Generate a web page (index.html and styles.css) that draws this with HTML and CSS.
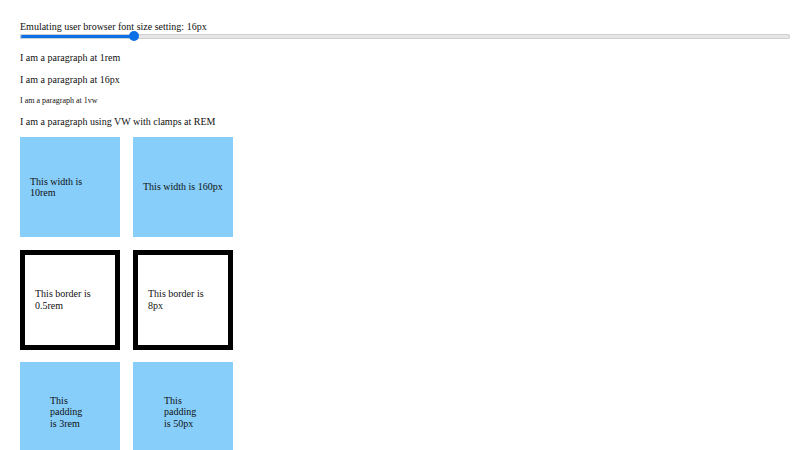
FILE: index.html
```html
<!DOCTYPE html>
<html lang="en">
<head>
<meta charset="utf-8">
<title>rem vs px</title>
<link rel="stylesheet" href="styles.css">
</head>
<body>
<main class="page">
  <div class="control">
    <label class="control-label" for="fs">Emulating user browser font size setting: 16px</label>
    <input class="slider" id="fs" type="range" min="8" max="64" value="16" style="--fill: 14.8%">
  </div>
  <p class="p-rem">I am a paragraph at 1rem</p>
  <p class="p-px">I am a paragraph at 16px</p>
  <p class="p-vw">I am a paragraph at 1vw</p>
  <p class="p-clamp">I am a paragraph using VW with clamps at REM</p>
  <div class="grid">
    <div class="box fill pad-sm"><span>This width is 10rem</span></div>
    <div class="box fill pad-sm"><span>This width is 160px</span></div>
    <div class="box bordered pad-sm"><span>This border is 0.5rem</span></div>
    <div class="box bordered pad-sm"><span>This border is 8px</span></div>
    <div class="box fill pad-lg"><span>This padding is 3rem</span></div>
    <div class="box fill pad-lg2"><span>This padding is 50px</span></div>
  </div>
</main>
</body>
</html>
```
FILE: styles.css
```css
html, body {
  margin: 0;
  padding: 0;
  background: #fff;
}
body {
  font-family: "Liberation Serif", "Times New Roman", serif;
  font-size: 10px;
  color: #111;
}
.page {
  padding: 21px 10px 0 20px;
}
.control {
  display: flex;
  flex-direction: column;
}
.control-label {
  font-size: 10px;
  line-height: 12px;
}
.slider {
  -webkit-appearance: none;
  appearance: none;
  margin: -2px 0 1px;
  width: 100%;
  height: 10px;
  background: transparent;
}
.slider::-webkit-slider-runnable-track {
  height: 5px;
  border-radius: 3px;
  background: linear-gradient(to right, #0b6fe6 0, #0b6fe6 var(--fill), #e6e6e6 var(--fill), #e6e6e6 100%);
  box-shadow: inset 0 0 0 1px #d0d0d0;
}
.slider::-webkit-slider-thumb {
  -webkit-appearance: none;
  appearance: none;
  width: 10px;
  height: 10px;
  border-radius: 50%;
  background: #0b6fe6;
  margin-top: -2.5px;
}
p {
  margin: 10px 0;
  line-height: 12px;
}
.p-rem, .p-px, .p-clamp {
  font-size: 10px;
}
.p-vw {
  font-size: 8px;
  line-height: 10px;
}
.p-clamp {
  margin-top: 9px;
  margin-bottom: 0;
}
.grid {
  display: grid;
  grid-template-columns: 100px 100px;
  gap: 12.5px 13px;
  margin-top: 9px;
}
.box {
  box-sizing: border-box;
  width: 100px;
  height: 100px;
  display: flex;
  align-items: center;
  line-height: 11.5px;
}
.fill {
  background: #87cefa;
}
.bordered {
  background: #fff;
  border: 5px solid #000;
}
.pad-sm {
  padding: 10px;
}
.pad-lg {
  padding: 30px;
}
.pad-lg2 {
  padding: 31px;
}
```
